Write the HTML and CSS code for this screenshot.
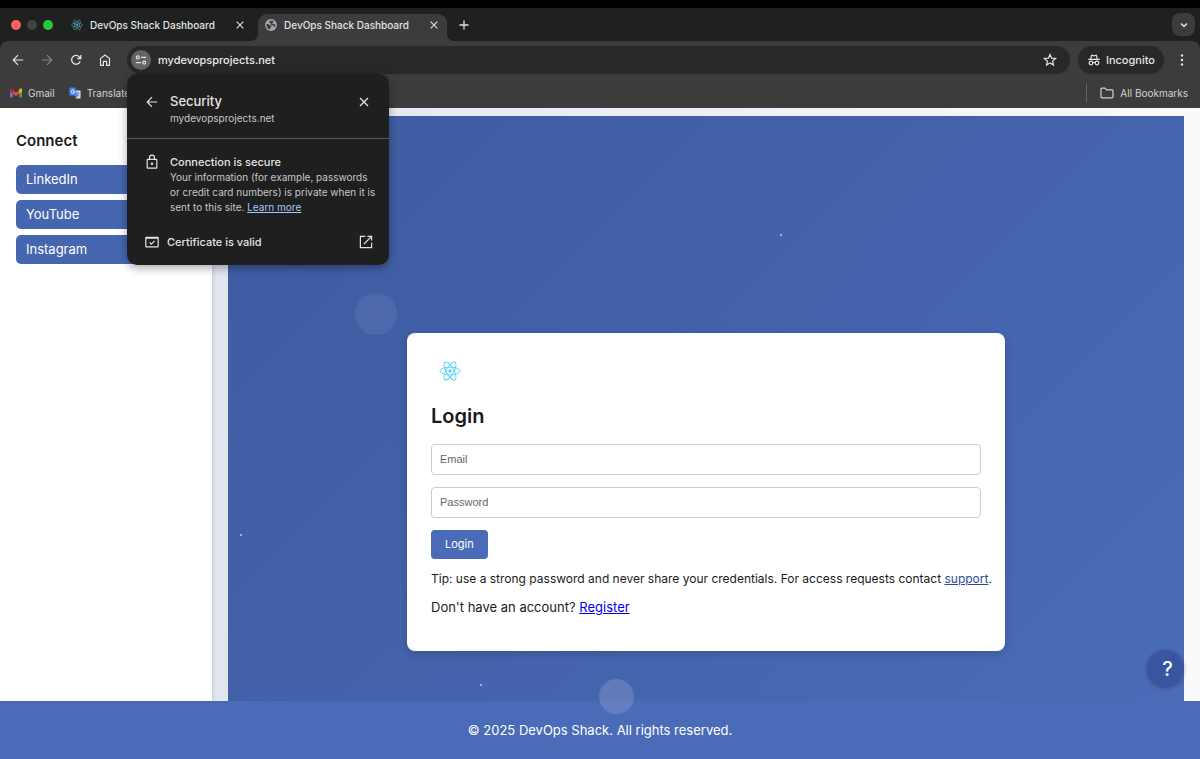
FILE: index.html
```html
<!DOCTYPE html>
<html lang="en">
<head>
<meta charset="utf-8">
<title>DevOps Shack Dashboard</title>
<link rel="stylesheet" href="styles.css">
</head>
<body>
<svg class="defs" aria-hidden="true">
  <symbol id="react" viewBox="-12 -12 24 24">
    <circle r="2" fill="currentColor"/>
    <g fill="none" stroke="currentColor">
      <ellipse rx="11" ry="4.2"/>
      <ellipse rx="11" ry="4.2" transform="rotate(60)"/>
      <ellipse rx="11" ry="4.2" transform="rotate(120)"/>
    </g>
  </symbol>
  <symbol id="close" viewBox="0 0 12 12"><path d="M2 2l8 8M10 2l-8 8" fill="none" stroke="currentColor" stroke-width="1.3"/></symbol>
  <symbol id="back" viewBox="0 0 12 12"><path d="M11.2 6H1.2M6 1.2L1.2 6 6 10.8" fill="none" stroke="currentColor" stroke-width="1.2"/></symbol>
</svg>

<header class="browser">
  <div class="tabs">
    <div class="lights"><i class="light red"></i><i class="light gray"></i><i class="light green"></i></div>
    <div class="tab">
      <svg class="icon12 tab-react"><use href="#react"/></svg>
      <span class="tab-title">DevOps Shack Dashboard</span>
      <button class="plain" aria-label="Close tab"><svg class="icon10"><use href="#close"/></svg></button>
    </div>
    <div class="tab active">
      <svg class="icon12" viewBox="0 0 12 12"><circle cx="6" cy="6" r="5.9" fill="#a3a6b2"/><path d="M1.500 5.200C2.600 4.800 4 5 4.600 5.900c.5.700 1.800.3 1.900 1.400 0 .9-1.100.8-1.200 1.600l-.2 1.500C3 10.200 1.300 8 1.500 5.200zM6.200 1.500c1 0 2 .3 2.700.9-.3.900-1.300.7-1.700 1.300-.3.500.2 1 .8 1.100.9.100 1 .8 2.500.7-.1.900-.4 1.900-1 2.700-.8-.2-.7-1.200-1.400-1.600-.8-.400-2-.2-2.400-1-.3-.7.200-1-.3-1.500-.400-.400-1 0-1.300-.5.200-1.200 1-2 2.100-2.100z" fill="#3c3c3c"/></svg>
      <span class="tab-title">DevOps Shack Dashboard</span>
      <button class="plain" aria-label="Close tab"><svg class="icon10"><use href="#close"/></svg></button>
    </div>
    <button class="plain new-tab" aria-label="New tab"><svg class="icon10" viewBox="0 0 10 10"><path d="M5 .5v9M.5 5h9" stroke="currentColor" stroke-width="1.3"/></svg></button>
    <button class="plain tab-search" aria-label="Search tabs"><svg class="icon10" viewBox="0 0 10 10"><path d="M2 3.500l3 3 3-3" fill="none" stroke="currentColor" stroke-width="1.500"/></svg></button>
  </div>

  <div class="toolbar">
    <nav class="nav-buttons" aria-label="History">
      <button class="plain" aria-label="Back"><svg class="icon12"><use href="#back"/></svg></button>
      <button class="plain dim" aria-label="Forward"><svg class="icon12 flip"><use href="#back"/></svg></button>
      <button class="plain" aria-label="Reload"><svg class="icon12" viewBox="0 0 12 12"><path d="M10.200 7.200A4.400 4.400 0 1 1 9.300 2.900L10.600 4.200M10.800 1v3.500H7.300" fill="none" stroke="currentColor" stroke-width="1.300"/></svg></button>
      <button class="plain" aria-label="Home"><svg class="icon12" viewBox="0 0 12 12"><path d="M1.500 4.600L6 1l4.500 3.600v6.800H7.600V7.400H4.400v4H1.500z" fill="none" stroke="currentColor" stroke-width="1.200"/></svg></button>
    </nav>
    <div class="omnibox">
      <button class="plain site-info" aria-label="View site information"><svg class="icon12" viewBox="0 0 12 12" fill="none" stroke="currentColor" stroke-width="1.200"><circle cx="2.800" cy="3.400" r="1.500"/><path d="M6 3.400h5.200M.8 8.600H6"/><circle cx="9.200" cy="8.600" r="1.500"/></svg></button>
      <input class="url" type="text" value="mydevopsprojects.net" aria-label="Address">
      <button class="plain" aria-label="Bookmark this tab"><svg class="icon14" viewBox="0 0 14 14"><path d="M7 1.500l1.600 3.700 4 .3-3 2.600.9 4L7 10l-3.500 2.100.9-4-3-2.600 4-.3z" fill="none" stroke="currentColor" stroke-width="1.200"/></svg></button>
    </div>
    <button class="plain incognito"><svg class="icon12" viewBox="0 0 12 12" fill="none" stroke="currentColor" stroke-width="1.200"><path d="M.2 5.400h11.600M2.600 5.200L3.700 1.200l2.300.6 2.300-.6 1.100 4"/><circle cx="3" cy="9" r="1.800"/><circle cx="9" cy="9" r="1.800"/><path d="M4.800 8.700q1.200-.7 2.400 0"/></svg>Incognito</button>
    <button class="plain menu" aria-label="Menu"><svg class="icon12" viewBox="0 0 12 12" fill="currentColor"><circle cx="6" cy="1.500" r="1.200"/><circle cx="6" cy="6" r="1.200"/><circle cx="6" cy="10.500" r="1.200"/></svg></button>
  </div>

  <div class="bookmarks">
    <a class="bookmark" href="#gmail"><svg class="icon12" viewBox="0 0 12 12"><path d="M0 2.500v8h2.700V5z" fill="#4285f4"/><path d="M12 2.500v8H9.300V5z" fill="#34a853"/><path d="M2.700 3v3.700L6 9.200l3.300-2.500V3L6 5.500z" fill="#ea4335"/><path d="M0 2.800C0 1.400 1.500 1 2.700 2v4.700L0 4.600z" fill="#c5221f"/><path d="M12 2.800C12 1.400 10.500 1 9.300 2v4.700L12 4.600z" fill="#fbbc04"/></svg>Gmail</a>
    <a class="bookmark" href="#translate"><svg class="icon12" viewBox="0 0 14 14"><path d="M5 4h7.500a1 1 0 0 1 1 1v7.500a1 1 0 0 1-1 1H8z" fill="#d8dce3"/><path d="M8.300 7h4M10.300 6v1M11.800 7q-.8 2.400-2.600 3.600M9.200 8.200q.9 1.600 2.500 2.400" fill="none" stroke="#5f7ba8" stroke-width=".8"/><path d="M1.500.5h5.700L10 10H1.500a1 1 0 0 1-1-1V1.500a1 1 0 0 1 1-1z" fill="#4285f4"/><path d="M6.200 4A2 2 0 1 0 6.700 5.500H4.900" fill="none" stroke="#fff" stroke-width=".9"/><path d="M7 10h3l-2 3.500z" fill="#2a5fc9"/></svg>Translate</a>
    <a class="bookmark all-bookmarks" href="#all"><svg class="icon14" viewBox="0 0 14 14"><path d="M1 3.200q0-1 1-1h3L6.500 3.800H12q1 0 1 1v6q0 1-1 1H2q-1 0-1-1z" fill="none" stroke="currentColor" stroke-width="1.200"/></svg>All Bookmarks</a>
  </div>

  <section class="popup" aria-label="Security">
    <div class="popup-head">
      <button class="plain popup-icon" aria-label="Back"><svg class="icon12"><use href="#back"/></svg></button>
      <div class="popup-text">
        <h2 class="popup-title">Security</h2>
        <p class="popup-site">mydevopsprojects.net</p>
      </div>
      <button class="plain popup-icon" aria-label="Close"><svg class="icon12"><use href="#close"/></svg></button>
    </div>
    <div class="popup-body">
      <svg class="icon14" viewBox="0 0 14 14" fill="none" stroke="currentColor" stroke-width="1.200"><rect x="2.200" y="4.400" width="9.600" height="8.800" rx=".6"/><path d="M4.500 4.400V2.700a2.500 2.500 0 0 1 5 0v1.700"/><circle cx="7" cy="8.800" r="1.200" fill="currentColor" stroke="none"/></svg>
      <div class="popup-text">
        <h3 class="popup-sub">Connection is secure</h3>
        <p class="popup-copy">Your information (for example, passwords or credit card numbers) is private when it is sent to this site. <a class="learn" href="#learn">Learn more</a></p>
      </div>
    </div>
    <button class="plain certificate">
      <svg class="icon14" viewBox="0 0 14 14" fill="none" stroke="currentColor" stroke-width="1.200"><rect x=".8" y="2.400" width="12.400" height="9.400" rx=".6"/><path d="M.8 3h12.400" stroke-width="1.600"/><path d="M4.600 7.400l1.700 1.700 3.300-3.300"/></svg>
      <span>Certificate is valid</span>
      <svg class="icon14 external" viewBox="0 0 14 14" fill="none" stroke="currentColor" stroke-width="1.200"><path d="M6.200 1.400H1.400v11.200h11.200V7.800M8.400 1.400h4.200v4.200M12.400 1.600L5 9"/></svg>
    </button>
  </section>
</header>

<div class="page">
  <aside class="sidebar">
    <h2 class="side-title">Connect</h2>
    <a class="social" href="#linkedin">LinkedIn</a>
    <a class="social" href="#youtube">YouTube</a>
    <a class="social" href="#instagram">Instagram</a>
  </aside>
  <main class="main">
    <form class="card">
      <svg class="logo"><use href="#react"/></svg>
      <h1 class="login-title">Login</h1>
      <input class="field" type="email" placeholder="Email" aria-label="Email">
      <input class="field" type="password" placeholder="Password" aria-label="Password">
      <button class="login" type="button">Login</button>
      <p class="tip">Tip: use a strong password and never share your credentials. For access requests contact <a class="support" href="#support">support</a>.</p>
      <p class="account">Don't have an account? <a class="register" href="#register">Register</a></p>
    </form>
  </main>
  <i class="bubble bubble-large"></i>
  <i class="bubble bubble-small"></i>
  <i class="star star-a"></i>
  <i class="star star-b"></i>
  <i class="star star-c"></i>
  <button class="help" aria-label="Help">?</button>
</div>
<footer class="footer">© 2025 DevOps Shack. All rights reserved.</footer>
</body>
</html>
```
FILE: styles.css
```css
* { box-sizing: border-box; }
body {
  margin: 0;
  min-height: 100vh;
  display: flex;
  flex-direction: column;
  font-family: Inter, "Liberation Sans", sans-serif;
  font-size: 13px;
  color: #1a1a1a;
}
h1, h2, h3, p { margin: 0; }
svg { display: block; flex: none; overflow: visible; }
.defs { position: absolute; width: 0; height: 0; }
.icon10 { width: 10px; height: 10px; }
.icon12 { width: 12px; height: 12px; }
.icon14 { width: 14px; height: 14px; }
.flip { transform: rotate(180deg); }
.plain {
  display: flex;
  align-items: center;
  padding: 0;
  border: 0;
  background: none;
  color: inherit;
  font: inherit;
}

/* Browser frame */
.browser {
  position: relative;
  z-index: 2;
  border-top: 8px solid #000;
  background: #1f2120;
  color: #e3e3e3;
}
.tabs { display: flex; align-items: center; height: 33px; padding: 0 5px 0 11px; }
.lights { display: flex; gap: 6px; margin-right: 18px; }
.light { width: 10px; height: 10px; border-radius: 50%; }
.red { background: #ff5f57; }
.gray { background: #404241; }
.green { background: #28c840; }
.tab { display: flex; align-items: center; gap: 7px; width: 174px; font-size: 10px; font-weight: 500; }
.tab-react { color: #58b4cc; }
.tab-title { flex: 1; white-space: nowrap; }
.active {
  position: relative;
  align-self: flex-end;
  width: 189px;
  height: 27px;
  margin-left: 13px;
  padding: 0 8px 5px 7px;
  border-radius: 9px 9px 0 0;
  background: #3c3c3c;
}
.active::before, .active::after {
  content: "";
  position: absolute;
  bottom: 0;
  width: 8px;
  height: 8px;
}
.active::before { right: 100%; background: radial-gradient(circle at 0 0, transparent 8px, #3c3c3c 8px); }
.active::after { left: 100%; background: radial-gradient(circle at 100% 0, transparent 8px, #3c3c3c 8px); }
.new-tab { margin-left: 12px; }
.tab-search {
  justify-content: center;
  width: 23px;
  height: 23px;
  margin-left: auto;
  border-radius: 8px;
  background: #3c3c3c;
}
.toolbar {
  display: flex;
  align-items: center;
  gap: 8px;
  height: 38px;
  padding: 0 12px;
  border-radius: 8px 8px 0 0;
  background: #3c3c3c;
}
.nav-buttons { display: flex; gap: 17px; margin-right: 8px; }
.dim { color: #858585; }
.omnibox {
  flex: 1;
  display: flex;
  align-items: center;
  gap: 7px;
  height: 28px;
  padding: 0 13px 0 4px;
  border-radius: 14px;
  background: #282828;
}
.site-info { justify-content: center; width: 20px; height: 20px; border-radius: 50%; background: #636363; }
.url { flex: 1; min-width: 0; padding: 0; border: 0; outline: 0; background: none; color: #e8e8e8; font: 500 11px Inter, sans-serif; }
.incognito { gap: 6px; height: 28px; padding: 0 9px 0 10px; border-radius: 14px; background: #282828; font-size: 11px; font-weight: 500; }
.menu { margin-left: 4px; }
.bookmarks { display: flex; align-items: center; gap: 14px; height: 29px; padding: 0 12px 1px 10px; background: #3c3c3c; }
.bookmark { display: flex; align-items: center; gap: 6px; color: #d2d2d2; font-size: 10px; text-decoration: none; }
.all-bookmarks { margin-left: auto; padding: 2px 0 2px 13px; border-left: 1px solid #666; }

/* Security popup */
.popup {
  position: absolute;
  top: 66px;
  left: 127px;
  width: 262px;
  padding-bottom: 16px;
  border-radius: 10px;
  background: #1f1f1f;
  box-shadow: 0 3px 10px rgba(0, 0, 0, .35);
}
.popup-head { display: flex; align-items: flex-start; gap: 12px; padding: 18px 19px 12px; border-bottom: 1px solid #5a5a5a; }
.popup-icon { height: 20px; }
.popup-text { flex: 1; }
.popup-title { font-size: 13px; line-height: 18px; font-weight: 500; }
.popup-site { font-size: 10px; line-height: 16px; color: #c7c7c7; }
.popup-body { display: flex; gap: 11px; padding: 16px 12px 20px 18px; }
.popup-sub { font-size: 11px; line-height: 15px; font-weight: 500; }
.popup-copy { font-size: 10px; line-height: 15px; color: #c7c7c7; }
.learn { color: #a8c7fa; }
.certificate { gap: 8px; width: 100%; padding: 0 16px 0 18px; font-size: 11px; font-weight: 500; }
.external { margin-left: auto; }

/* Page */
.page {
  position: relative;
  flex: 1;
  display: flex;
  padding-right: 16px;
  background: linear-gradient(90deg, #dbe1ee, #f9fafc);
}
.sidebar {
  display: flex;
  flex-direction: column;
  gap: 6px;
  width: 212px;
  padding: 22px 16px;
  background: #fff;
  box-shadow: 1px 0 4px rgba(0, 0, 0, .12);
}
.side-title { margin-bottom: 8px; font-size: 15px; line-height: 21px; font-weight: 600; }
.social {
  padding: 4px 10px;
  border-radius: 5px;
  background: #4666b0;
  color: #fff;
  font-size: 13px;
  line-height: 21px;
  text-decoration: none;
}
.main {
  flex: 1;
  display: flex;
  align-items: center;
  justify-content: center;
  margin: 8px 0 0 16px;
  padding-top: 166px;
  background: linear-gradient(135deg, #3e5ba0, #4a6bb7);
}
.card {
  display: flex;
  flex-direction: column;
  align-items: flex-start;
  width: 100%;
  max-width: 598px;
  padding: 24px 24px 34px;
  border-radius: 8px;
  background: #fff;
  box-shadow: 0 2px 8px rgba(0, 0, 0, .18);
}
.logo { width: 22px; height: 22px; margin: 3px 8px; color: #4fd2f5; }
.login-title { margin: 17px 0 14px; font-size: 20px; line-height: 28px; font-weight: 600; }
.field {
  width: 100%;
  height: 31px;
  margin-bottom: 12px;
  padding: 0 8px;
  border: 1px solid #ccc;
  border-radius: 4px;
  background: #fff;
  font: 11px "Liberation Sans", sans-serif;
}
.field::placeholder { color: #666; opacity: 1; }
.login { height: 29px; padding: 0 14px; border: 0; border-radius: 4px; background: #4a6bb7; color: #fff; font: 11px Inter, sans-serif; }
.tip { margin-top: 10px; font-size: 12px; line-height: 20px; white-space: nowrap; }
.account { margin-top: 8px; font-size: 13px; line-height: 20px; }
.support { color: #2d4a96; }
.register { color: #00e; }
.bubble, .star { position: absolute; border-radius: 50%; background: #fff; }
.bubble-large { top: 185px; left: 355px; width: 42px; height: 42px; opacity: .07; }
.bubble-small { bottom: -13px; left: 599px; z-index: 1; width: 35px; height: 35px; opacity: .14; }
.star { width: 2px; height: 2px; opacity: .7; }
.star-a { top: 126px; left: 780px; }
.star-b { top: 426px; left: 240px; }
.star-c { top: 576px; left: 480px; }
.help {
  position: absolute;
  right: 16px;
  bottom: 14px;
  width: 37px;
  height: 37px;
  padding: 0 0 0 4px;
  border: 0;
  border-radius: 50%;
  background: #3a559f;
  color: #fff;
  font: 500 20px Inter, sans-serif;
  box-shadow: 0 1px 4px rgba(0, 0, 0, .3);
}
.footer {
  padding: 19px 16px;
  background: #4a6bb7;
  box-shadow: 0 -1px 4px rgba(0, 0, 0, .2);
  color: #fff;
  font-size: 13px;
  line-height: 20px;
  text-align: center;
}
```
